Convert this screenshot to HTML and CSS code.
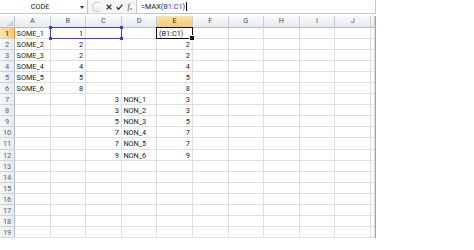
FILE: index.html
```html
<!DOCTYPE html>
<html>
<head>
<meta charset="utf-8">
<title>Sheet</title>
<link rel="stylesheet" href="styles.css">
</head>
<body>
<div class="app">
  <div class="fbar">
    <div class="namebox"><span class="name">CODE</span><span class="dd"></span></div>
    <div class="tools">
      <span class="grip"></span>
      <svg class="ico x" viewBox="0 0 6 6" width="6" height="6"><path d="M0.7 0.7 L5.3 5.3 M5.3 0.7 L0.7 5.3"/></svg>
      <svg class="ico ok" viewBox="0 0 7 6" width="7" height="6"><path d="M0.6 3.2 L2.6 5.2 L6.4 0.6"/></svg>
      <span class="fx">f<sub>x</sub></span>
    </div>
    <div class="formula">=MAX(<span class="ref">B1:C1</span>)<span class="caret"></span></div>
  </div>
  <div class="sheet">
    <div class="corner"></div><div class="h">A</div><div class="h">B</div><div class="h">C</div><div class="h">D</div><div class="h on">E</div><div class="h">F</div><div class="h">G</div><div class="h">H</div><div class="h">I</div><div class="h">J</div><div class="h"></div>

    <div class="rh on">1</div><div>SOME_1</div><div class="n">1</div><div></div><div></div><div>(B1:C1)</div><div></div><div></div><div></div><div></div><div></div><div></div>
    <div class="rh">2</div><div>SOME_2</div><div class="n">2</div><div></div><div></div><div class="n">2</div><div></div><div></div><div></div><div></div><div></div><div></div>
    <div class="rh">3</div><div>SOME_3</div><div class="n">2</div><div></div><div></div><div class="n">2</div><div></div><div></div><div></div><div></div><div></div><div></div>
    <div class="rh">4</div><div>SOME_4</div><div class="n">4</div><div></div><div></div><div class="n">4</div><div></div><div></div><div></div><div></div><div></div><div></div>
    <div class="rh">5</div><div>SOME_5</div><div class="n">5</div><div></div><div></div><div class="n">5</div><div></div><div></div><div></div><div></div><div></div><div></div>
    <div class="rh">6</div><div>SOME_6</div><div class="n">8</div><div></div><div></div><div class="n">8</div><div></div><div></div><div></div><div></div><div></div><div></div>
    <div class="rh">7</div><div></div><div></div><div class="n">3</div><div>NON_1</div><div class="n">3</div><div></div><div></div><div></div><div></div><div></div><div></div>
    <div class="rh">8</div><div></div><div></div><div class="n">3</div><div>NON_2</div><div class="n">3</div><div></div><div></div><div></div><div></div><div></div><div></div>
    <div class="rh">9</div><div></div><div></div><div class="n">5</div><div>NON_3</div><div class="n">5</div><div></div><div></div><div></div><div></div><div></div><div></div>
    <div class="rh">10</div><div></div><div></div><div class="n">7</div><div>NON_4</div><div class="n">7</div><div></div><div></div><div></div><div></div><div></div><div></div>
    <div class="rh">11</div><div></div><div></div><div class="n">7</div><div>NON_5</div><div class="n">7</div><div></div><div></div><div></div><div></div><div></div><div></div>
    <div class="rh">12</div><div></div><div></div><div class="n">9</div><div>NON_6</div><div class="n">9</div><div></div><div></div><div></div><div></div><div></div><div></div>
    <div class="rh">13</div><div></div><div></div><div></div><div></div><div></div><div></div><div></div><div></div><div></div><div></div><div></div>
    <div class="rh">14</div><div></div><div></div><div></div><div></div><div></div><div></div><div></div><div></div><div></div><div></div><div></div>
    <div class="rh">15</div><div></div><div></div><div></div><div></div><div></div><div></div><div></div><div></div><div></div><div></div><div></div>
    <div class="rh">16</div><div></div><div></div><div></div><div></div><div></div><div></div><div></div><div></div><div></div><div></div><div></div>
    <div class="rh">17</div><div></div><div></div><div></div><div></div><div></div><div></div><div></div><div></div><div></div><div></div><div></div>
    <div class="rh">18</div><div></div><div></div><div></div><div></div><div></div><div></div><div></div><div></div><div></div><div></div><div></div>
    <div class="rh">19</div><div></div><div></div><div></div><div></div><div></div><div></div><div></div><div></div><div></div><div></div><div></div>

    <span class="range"><i class="hd tl"></i><i class="hd tr"></i><i class="hd bl"></i><i class="hd br"></i></span>
    <span class="active"></span>
  </div>
</div>
</body>
</html>
```

FILE: styles.css
```css
* { box-sizing: border-box; }
html, body { margin: 0; padding: 0; background: #fff; }
body {
  font-family: Roboto, "Liberation Sans", sans-serif;
  font-size: 7.3px;
  color: #1a1a1a;
  width: 474px;
  height: 250px;
  overflow: hidden;
}
.app { width: 376px; }

/* formula bar */
.fbar {
  display: flex;
  height: 14px;
  margin-bottom: 2px;
  background: #f4f5f7;
}
.namebox {
  width: 88px;
  display: flex;
  align-items: center;
  background: #fff;
  border-bottom: 1px solid #c3c8cf;
  border-right: 1px solid #c3c8cf;
}
.name { flex: 1; text-align: center; color: #222; }
.dd {
  width: 0; height: 0;
  margin: 1px 3px 0 0;
  border-top: 3px solid #333;
  border-left: 2.5px solid transparent;
  border-right: 2.5px solid transparent;
}
.tools {
  width: 48px;
  display: flex;
  align-items: center;
  border-bottom: 1px solid #d3d7dc;
}
.grip {
  width: 8px;
  height: 10px;
  margin-left: 4px;
  border: 1px solid #c9cdd3;
  border-right: none;
  border-radius: 5px 0 0 5px;
  background: linear-gradient(#fdfdfd, #eceef1);
}
.ico { fill: none; stroke: #3a3a3a; stroke-width: 1.3; }
.ico.x { margin-left: 6px; }
.ico.ok { margin-left: 4px; stroke-width: 1.4; }
.fx {
  margin-left: 4.5px;
  font-family: "Liberation Serif", serif;
  font-style: italic;
  font-size: 8px;
  color: #333;
  line-height: 1;
}
.fx sub { font-size: 5px; vertical-align: -1px; }
.formula {
  flex: 1;
  display: flex;
  align-items: center;
  padding-left: 4px;
  background: #fff;
  border-left: 1px solid #c3c8cf;
  border-right: 1px solid #c3c8cf;
  border-bottom: 1px solid #c3c8cf;
  color: #111;
  white-space: pre;
}
.ref { color: #3232e6; }
.caret { width: 1px; height: 9px; background: #000; margin-left: 0.5px; }

/* sheet */
.sheet {
  position: relative;
  display: grid;
  grid-template-columns: 15px repeat(10, 35.6px) 4px;
  grid-template-rows: 11.5px repeat(19, 11.1px);
  border-right: 1px solid #9ea3aa;
}
.sheet > div {
  border-right: 1px solid #dcdfe3;
  border-bottom: 1px solid #dcdfe3;
  padding: 1px 1.6px 0;
  line-height: 9.5px;
  white-space: nowrap;
  overflow: visible;
}
.sheet > div.n { text-align: right; padding-right: 2px; }
.sheet > .corner {
  position: relative;
  background: linear-gradient(#f7f8fa, #e6e9ee);
  border-right: 1px solid #b9c0c9;
  border-bottom: 1px solid #b9c0c9;
}
.corner::after {
  content: "";
  position: absolute;
  right: 1px; bottom: 1px;
  border-left: 6px solid transparent;
  border-bottom: 6px solid #c9ced5;
}
.sheet > .h {
  background: linear-gradient(#f8f9fb, #e7eaee);
  border-right: 1px solid #c7ccd3;
  border-bottom: 1px solid #b5bcc6;
  text-align: center;
  color: #4a4f57;
  line-height: 10px;
  padding: 0;
}
.sheet > .rh {
  background: linear-gradient(90deg, #f6f7f9, #e8ebef);
  border-right: 1px solid #b5bcc6;
  border-bottom: 1px solid #cfd3d9;
  text-align: center;
  color: #56607a;
  padding: 1px 0 0;
}
.sheet > .h.on {
  background: linear-gradient(#fbe3ad, #f4c96f);
  border-bottom: 1px solid #e8922f;
  color: #2b2b2b;
}
.sheet > .rh.on {
  background: linear-gradient(90deg, #fbe3ad, #f4c96f);
  border-right: 1px solid #e8922f;
  color: #2b2b2b;
}

/* overlays */
.range {
  position: absolute;
  grid-row: 2 / 3;
  grid-column: 3 / 5;
  top: -1px; left: -1px; right: 0; bottom: 0;
  border: 1px solid #3d3de0;
  border-left-width: 1.5px;
  border-right-width: 1.5px;
  pointer-events: none;
}
.hd {
  position: absolute;
  width: 3px; height: 3px;
  background: #3d3de0;
}
.hd.tl { left: -2px; top: -2px; }
.hd.tr { right: -2px; top: -2px; }
.hd.bl { left: -2px; bottom: -2px; }
.hd.br { right: -2px; bottom: -2px; }
.active {
  position: absolute;
  grid-row: 2 / 3;
  grid-column: 6 / 7;
  top: -1px; left: -1px; right: 0; bottom: 0;
  border: 1.5px solid #111;
}
.active::after {
  content: "";
  position: absolute;
  right: -3px; bottom: -3px;
  width: 4px; height: 4px;
  background: #111;
  border: 1px solid #fff;
}
```
